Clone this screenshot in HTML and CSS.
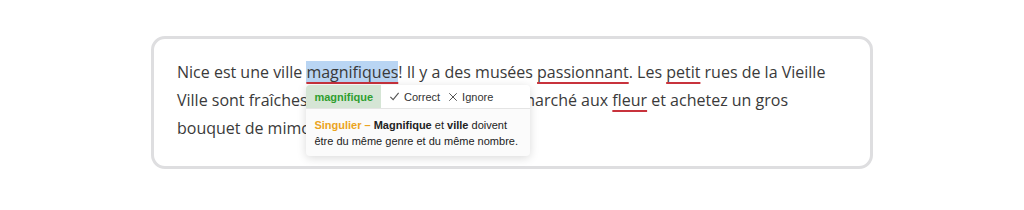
FILE: index.html
```
<!DOCTYPE html>
<html lang="fr">
<head>
    <meta charset="UTF-8">
    <title>Correcteur</title>
    <link rel="stylesheet" href="styles.css">
</head>
<body>
    <div class="card">
        <p class="texte">
            Nice est une ville <span class="mot-wrap"><span class="mot erreur actif">magnifiques</span><span class="popup">
                <span class="popup-head">
                    <span class="suggestion">magnifique</span>
                    <span class="action">
                        <svg width="11" height="11" viewBox="0 0 12 12"><path d="M1.5 6.5 L4.5 9.5 L10.5 2" fill="none" stroke="#555" stroke-width="1.2"/></svg>
                        Correct
                    </span>
                    <span class="action">
                        <svg width="10" height="10" viewBox="0 0 12 12"><path d="M1.5 1.5 L10.5 10.5 M10.5 1.5 L1.5 10.5" fill="none" stroke="#555" stroke-width="1.2"/></svg>
                        Ignore
                    </span>
                </span>
                <span class="popup-body">
                    <b class="regle">Singulier –</b> <b>Magnifique</b> et <b>ville</b> doivent
                    être du même genre et du même nombre.
                </span>
            </span></span>! Il y a des musées <span class="erreur">passionnant</span>. Les <span class="erreur">petit</span> rues de la Vieille
            Ville sont fraîches et colorées. Passez alors au marché aux <span class="erreur">fleur</span> et achetez un gros
            bouquet de mimosa.
        </p>
    </div>
</body>
</html>
```

FILE: styles.css
```
body {
    margin: 0;
    background: #ffffff;
    font-family: 'Open Sans', sans-serif;
}

.card {
    width: 722px;
    box-sizing: border-box;
    margin: 36px auto 0;
    border: 3px solid #dedee0;
    border-radius: 14px;
    padding: 19px 40px 24px 23px;
}

.texte {
    margin: 0;
    font-size: 16px;
    line-height: 28px;
    color: #3a3a3a;
}

.erreur {
    text-decoration: underline;
    text-decoration-color: #c8323c;
    text-decoration-thickness: 1.5px;
    text-underline-offset: 4px;
}

.mot-wrap {
    position: relative;
}

.actif {
    background-color: #b9d5f3;
}

.popup {
    position: absolute;
    left: 0;
    top: 100%;
    margin-top: 2px;
    width: 224px;
    background: #fbfbfb;
    border-radius: 4px;
    box-shadow: 0 2px 10px rgba(0, 0, 0, 0.15);
    font-family: 'Liberation Sans', Arial, sans-serif;
    font-size: 11px;
    line-height: 16px;
    color: #222;
    z-index: 2;
}

.popup-head {
    display: flex;
    align-items: center;
    height: 23px;
    background: #ffffff;
    border-bottom: 1px solid #e4e4e4;
    border-radius: 4px 4px 0 0;
}

.suggestion {
    display: flex;
    align-items: center;
    height: 100%;
    padding: 0 8px;
    background: #d5e5d5;
    color: #2f9e2f;
    font-weight: bold;
    border-radius: 4px 0 0 0;
}

.action {
    display: flex;
    align-items: center;
    gap: 4px;
    margin-left: 8px;
    color: #333;
}

.popup-body {
    display: block;
    padding: 8px 8px 7px;
}

.regle {
    color: #eba422;
}
```
